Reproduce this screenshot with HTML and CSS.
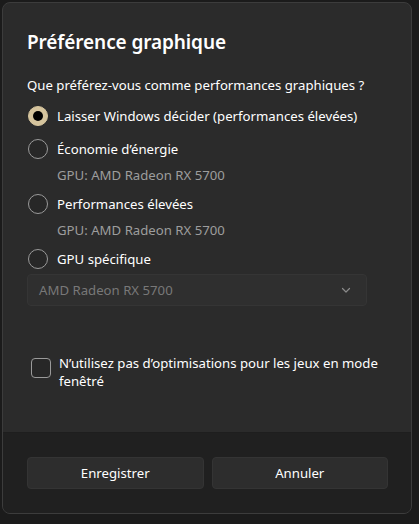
FILE: index.html
```html
<!DOCTYPE html>
<html lang="fr">
<head>
<meta charset="utf-8">
<link rel="stylesheet" href="styles.css">
</head>
<body>
<div class="dialog">
  <div class="content">
    <h1 class="title">Préférence graphique</h1>
    <p class="question">Que préférez-vous comme performances graphiques ?</p>
    <div class="options">
      <label class="option">
        <span class="radio checked"><span class="dot"></span></span>
        <span class="label">Laisser Windows décider (performances élevées)</span>
      </label>
      <div class="option-group">
        <label class="option">
          <span class="radio"></span>
          <span class="label">Économie d’énergie</span>
        </label>
        <div class="sub">GPU: AMD Radeon RX 5700</div>
      </div>
      <div class="option-group">
        <label class="option">
          <span class="radio"></span>
          <span class="label">Performances élevées</span>
        </label>
        <div class="sub">GPU: AMD Radeon RX 5700</div>
      </div>
      <label class="option">
        <span class="radio"></span>
        <span class="label">GPU spécifique</span>
      </label>
    </div>
    <div class="select">
      <span>AMD Radeon RX 5700</span>
      <svg class="chev" width="12" height="12" viewBox="0 0 12 12"><path d="M2.5 4.5 L6 8 L9.5 4.5" fill="none" stroke="#8a8a8a" stroke-width="1.2" stroke-linecap="round" stroke-linejoin="round"/></svg>
    </div>
    <label class="check">
      <span class="box"></span>
      <span class="check-label">N’utilisez pas d’optimisations pour les jeux en mode fenêtré</span>
    </label>
  </div>
  <div class="footer">
    <button class="btn">Enregistrer</button>
    <button class="btn">Annuler</button>
  </div>
</div>
</body>
</html>
```
FILE: styles.css
```css
* { box-sizing: border-box; }
html, body { margin: 0; padding: 0; }
body {
  background: #1b1b1b;
  width: 419px;
  height: 524px;
  font-family: "Noto Sans", "Open Sans", sans-serif;
  color: #ffffff;
  padding: 2px 0 0 2px;
}
.dialog {
  width: 410px;
  height: 512px;
  background: #2b2b2b;
  border: 1px solid #3c3c3c;
  border-radius: 8px;
  overflow: hidden;
  display: flex;
  flex-direction: column;
}
.content {
  flex: 1;
  padding: 25px 24px 0 24px;
}
.title {
  margin: 0;
  font-size: 19px;
  font-weight: 600;
  line-height: 28px;
  letter-spacing: -0.1px;
}
.question {
  margin: 19px 0 0 0;
  font-size: 13.2px;
  line-height: 20px;
  color: #ffffff;
}
.options {
  margin-top: 5px;
  display: flex;
  flex-direction: column;
  gap: 2px;
}
.option {
  display: flex;
  align-items: center;
  height: 31px;
}
.radio {
  width: 20px;
  height: 20px;
  border-radius: 50%;
  border: 1px solid #9a9a9a;
  background: #272727;
  display: flex;
  align-items: center;
  justify-content: center;
  flex: none;
  margin-left: 1px;
}
.radio.checked {
  background: #d5c49d;
  border-color: #d5c49d;
}
.dot {
  width: 10px;
  height: 10px;
  border-radius: 50%;
  background: #000;
}
.label {
  margin-left: 9px;
  font-size: 13.2px;
  line-height: 20px;
}
.sub {
  margin-left: 30px;
  font-size: 13.2px;
  line-height: 20px;
  color: #9d9d9d;
  margin-top: 1px;
  margin-bottom: 1px;
}
.select {
  margin-top: 0;
  width: 340px;
  height: 32px;
  background: #2f2f2f;
  border: 1px solid #353535;
  border-radius: 4px;
  display: flex;
  align-items: center;
  justify-content: space-between;
  padding: 0 14px 0 11px;
  font-size: 13.2px;
  color: #787878;
}
.chev { flex: none; }
.check {
  margin-top: 51px;
  margin-left: 4px;
  display: flex;
  align-items: flex-start;
}
.box {
  width: 20px;
  height: 20px;
  border: 1px solid #9a9a9a;
  border-radius: 4px;
  background: #272727;
  flex: none;
  margin-top: 1px;
}
.check-label {
  margin-left: 8px;
  font-size: 13.2px;
  line-height: 18px;
  margin-top: -3px;
}
.footer {
  height: 81px;
  flex: none;
  background: #202020;
  border-top: 1px solid #1e1e1e;
  display: flex;
  gap: 8px;
  padding: 24px 23px 0 24px;
}
.btn {
  flex: 1;
  height: 32px;
  background: #2d2d2d;
  border: 1px solid #343434;
  border-radius: 4px;
  color: #ffffff;
  font-family: "Noto Sans", "Open Sans", sans-serif;
  font-size: 13.2px;
}
```
